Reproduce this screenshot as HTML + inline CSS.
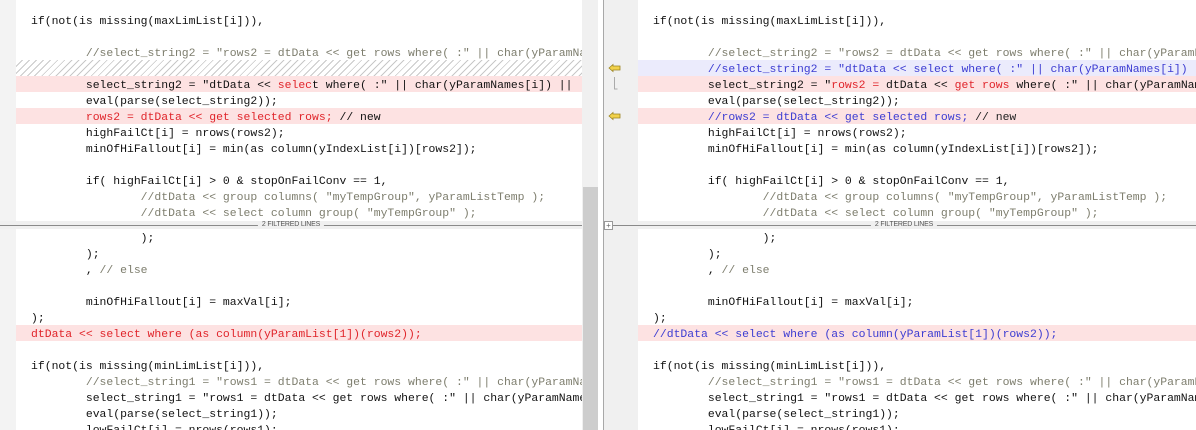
<!DOCTYPE html>
<html><head><style>
body{margin:0;width:1196px;height:430px;overflow:hidden;background:#fff;font-family:"Liberation Mono",monospace;font-size:11.43px;color:#111;position:relative}
.pane{position:absolute;top:0;height:430px;overflow:hidden;background:#fff}
.r{position:absolute;left:0;right:0;height:14px;padding-top:2px;line-height:15px;white-space:pre;padding-left:15px}
.p{background:#fde2e2}.b{background:#ebebfc}
.h{background:repeating-linear-gradient(135deg,#fff 0 4px,#c8c8c8 4px 5px)}
.c{color:#7d7d6d}.x{color:#e0242a}.u{color:#3c3cd2}
.sep{position:absolute;top:221px;height:8px;background:#f0f0f0}
.sep i{position:absolute;left:0;right:0;top:4px;border-top:1px solid #8a8a8a}
.sep span{position:absolute;left:50%;transform:translateX(-50%);top:0;font:7px "Liberation Sans",sans-serif;line-height:8px;background:#f0f0f0;padding:0 4px;color:#555;letter-spacing:-0.2px}
</style></head><body>
<div style="position:absolute;left:0;top:0;width:16px;height:430px;background:#f3f3f3"></div>
<div class="pane" style="left:16px;width:566px">
<div class="r" style="top:12px">if(not(is missing(maxLimList[i])),</div>
<div class="r c" style="top:44px">        //select_string2 = "rows2 = dtData &lt;&lt; get rows where( :" || char(yParamNames[i]) ||</div>
<div class="r h" style="top:60px"></div>
<div class="r p" style="top:76px">        select_string2 = "dtData &lt;&lt; <span class="x">selec</span>t where( :" || char(yParamNames[i]) ||</div>
<div class="r" style="top:92px">        eval(parse(select_string2));</div>
<div class="r p" style="top:108px">        <span class="x">rows2 = dtData &lt;&lt; get selected rows;</span> // new</div>
<div class="r" style="top:124px">        highFailCt[i] = nrows(rows2);</div>
<div class="r" style="top:140px">        minOfHiFallout[i] = min(as column(yIndexList[i])[rows2]);</div>
<div class="r" style="top:172px">        if( highFailCt[i] &gt; 0 &amp; stopOnFailConv == 1,</div>
<div class="r c" style="top:188px">                //dtData &lt;&lt; group columns( "myTempGroup", yParamListTemp );</div>
<div class="r c" style="top:204px">                //dtData &lt;&lt; select column group( "myTempGroup" );</div>
<div class="r" style="top:229px">                );</div>
<div class="r" style="top:245px">        );</div>
<div class="r" style="top:261px">        , <span class="c">// else</span></div>
<div class="r" style="top:293px">        minOfHiFallout[i] = maxVal[i];</div>
<div class="r" style="top:309px">);</div>
<div class="r p x" style="top:325px">dtData &lt;&lt; select where (as column(yParamList[1])(rows2));</div>
<div class="r" style="top:357px">if(not(is missing(minLimList[i])),</div>
<div class="r c" style="top:373px">        //select_string1 = "rows1 = dtData &lt;&lt; get rows where( :" || char(yParamNames[i]) ||</div>
<div class="r" style="top:389px">        select_string1 = "rows1 = dtData &lt;&lt; get rows where( :" || char(yParamNames[i]) ||</div>
<div class="r" style="top:405px">        eval(parse(select_string1));</div>
<div class="r" style="top:421px">        lowFailCt[i] = nrows(rows1);</div>
</div>
<div style="position:absolute;left:582px;top:0;width:16px;height:430px;background:#f0f0f0"></div>
<div style="position:absolute;left:583px;top:187px;width:15px;height:243px;background:#cdcdcd"></div>
<div style="position:absolute;left:603px;top:0;width:35px;height:430px;background:#f0f0f0;border-left:1px solid #a8a8a8"></div>
<div class="pane" style="left:638px;width:558px">
<div class="r" style="top:12px">if(not(is missing(maxLimList[i])),</div>
<div class="r c" style="top:44px">        //select_string2 = "rows2 = dtData &lt;&lt; get rows where( :" || char(yParamNames[i]) ||</div>
<div class="r b u" style="top:60px">        //select_string2 = "dtData &lt;&lt; select where( :" || char(yParamNames[i]) ||</div>
<div class="r p" style="top:76px">        select_string2 = "<span class="x">rows2 =</span> dtData &lt;&lt; <span class="x">get</span> <span class="x">rows</span> where( :" || char(yParamNames[i]) ||</div>
<div class="r" style="top:92px">        eval(parse(select_string2));</div>
<div class="r p u" style="top:108px">        //rows2 = dtData &lt;&lt; get selected rows; <span style="color:#222">// new</span></div>
<div class="r" style="top:124px">        highFailCt[i] = nrows(rows2);</div>
<div class="r" style="top:140px">        minOfHiFallout[i] = min(as column(yIndexList[i])[rows2]);</div>
<div class="r" style="top:172px">        if( highFailCt[i] &gt; 0 &amp; stopOnFailConv == 1,</div>
<div class="r c" style="top:188px">                //dtData &lt;&lt; group columns( "myTempGroup", yParamListTemp );</div>
<div class="r c" style="top:204px">                //dtData &lt;&lt; select column group( "myTempGroup" );</div>
<div class="r" style="top:229px">                );</div>
<div class="r" style="top:245px">        );</div>
<div class="r" style="top:261px">        , <span class="c">// else</span></div>
<div class="r" style="top:293px">        minOfHiFallout[i] = maxVal[i];</div>
<div class="r" style="top:309px">);</div>
<div class="r p u" style="top:325px">//dtData &lt;&lt; select where (as column(yParamList[1])(rows2));</div>
<div class="r" style="top:357px">if(not(is missing(minLimList[i])),</div>
<div class="r c" style="top:373px">        //select_string1 = "rows1 = dtData &lt;&lt; get rows where( :" || char(yParamNames[i]) ||</div>
<div class="r" style="top:389px">        select_string1 = "rows1 = dtData &lt;&lt; get rows where( :" || char(yParamNames[i]) ||</div>
<div class="r" style="top:405px">        eval(parse(select_string1));</div>
<div class="r" style="top:421px">        lowFailCt[i] = nrows(rows1);</div>
</div>
<div class="sep" style="left:0;width:582px"><i></i><span>2 FILTERED LINES</span></div>
<div class="sep" style="left:612px;width:584px"><i></i><span>2 FILTERED LINES</span></div>
<div style="position:absolute;left:604px;top:221px;width:7px;height:7px;border:1px solid #999;background:#fff;font:8px/7px 'Liberation Sans',sans-serif;text-align:center;color:#666">+</div>
<svg style="position:absolute;left:608px;top:63px" width="16" height="60" viewBox="0 0 16 60">
<path d="M1 5 L5 1.5 L5 3 L12 3 L12 7 L5 7 L5 8.5 Z" fill="#f2d24a" stroke="#9a8420" stroke-width="0.8"/>
<path d="M6.5 14 L6.5 26 L9.5 26" fill="none" stroke="#aaa"/>
<path d="M1 53 L5 49.5 L5 51 L12 51 L12 55 L5 55 L5 56.5 Z" fill="#f2d24a" stroke="#9a8420" stroke-width="0.8"/>
</svg>
</body></html>
